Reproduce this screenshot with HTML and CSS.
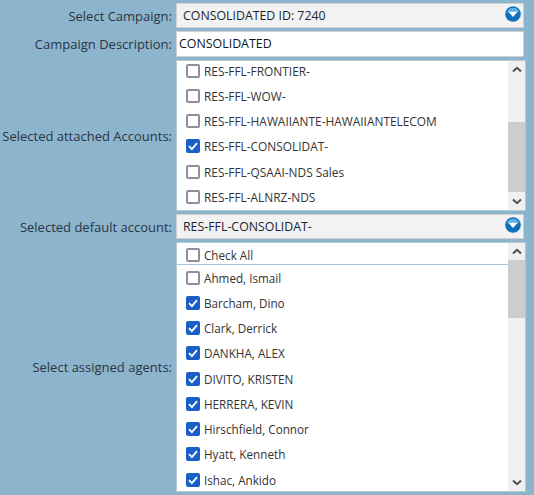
FILE: index.html
```html
<!DOCTYPE html>
<html lang="en">
<head>
  <meta charset="UTF-8" />
  <title>Campaign Settings</title>
  <link rel="stylesheet" href="styles.css">
</head>
<body>
  <svg width="0" height="0" class="defs">
    <symbol id="tick" viewBox="0 0 14 14">
      <rect width="14" height="14" rx="2" fill="#1a5fc8"/>
      <path d="M3 7.2 L5.9 10.1 L11 4.2" fill="none" stroke="#fff" stroke-width="1.8"/>
    </symbol>
    <symbol id="drop" viewBox="0 0 18 18">
      <circle cx="9" cy="9" r="8.8" fill="#0f6fb8"/>
      <path d="M2 7 A7.4 7.4 0 0 1 16 7 Z" fill="#5aaee6"/>
      <path d="M3.8 6.5 H14.2 L9 12.5 Z" fill="#fff"/>
    </symbol>
    <symbol id="up" viewBox="0 0 10 7">
      <path d="M1 5.5 L5 1.8 L9 5.5" fill="none" stroke="#505050" stroke-width="2"/>
    </symbol>
    <symbol id="down" viewBox="0 0 10 7">
      <path d="M1 1.5 L5 5.2 L9 1.5" fill="none" stroke="#505050" stroke-width="2"/>
    </symbol>
  </svg>

  <div class="form">
    <label class="lbl">Select Campaign:</label>
    <div class="combo">
      <span>CONSOLIDATED ID: 7240</span>
      <svg class="drop"><use href="#drop"/></svg>
    </div>

    <label class="lbl">Campaign Description:</label>
    <div class="textbox">CONSOLIDATED</div>

    <label class="lbl">Selected attached Accounts:</label>
    <div class="listbox accounts">
      <div class="items">
        <div class="item"><span class="box"></span>RES-FFL-FRONTIER-</div>
        <div class="item"><span class="box"></span>RES-FFL-WOW-</div>
        <div class="item"><span class="box"></span>RES-FFL-HAWAIIANTE-HAWAIIANTELECOM</div>
        <div class="item"><svg class="check"><use href="#tick"/></svg>RES-FFL-CONSOLIDAT-</div>
        <div class="item"><span class="box"></span>RES-FFL-QSAAI-NDS Sales</div>
        <div class="item"><span class="box"></span>RES-FFL-ALNRZ-NDS</div>
      </div>
      <div class="scrollbar">
        <div class="arrow"><svg class="chev"><use href="#up"/></svg></div>
        <div class="track"><div class="thumb thumb-accounts"></div></div>
        <div class="arrow"><svg class="chev"><use href="#down"/></svg></div>
      </div>
    </div>

    <label class="lbl">Selected default account:</label>
    <div class="combo">
      <span>RES-FFL-CONSOLIDAT-</span>
      <svg class="drop"><use href="#drop"/></svg>
    </div>

    <label class="lbl">Select assigned agents:</label>
    <div class="listbox agents">
      <div class="items">
        <div class="item check-all"><span class="box"></span>Check All</div>
        <div class="item"><span class="box"></span>Ahmed, Ismail</div>
        <div class="item"><svg class="check"><use href="#tick"/></svg>Barcham, Dino</div>
        <div class="item"><svg class="check"><use href="#tick"/></svg>Clark, Derrick</div>
        <div class="item"><svg class="check"><use href="#tick"/></svg>DANKHA, ALEX</div>
        <div class="item"><svg class="check"><use href="#tick"/></svg>DIVITO, KRISTEN</div>
        <div class="item"><svg class="check"><use href="#tick"/></svg>HERRERA, KEVIN</div>
        <div class="item"><svg class="check"><use href="#tick"/></svg>Hirschfield, Connor</div>
        <div class="item"><svg class="check"><use href="#tick"/></svg>Hyatt, Kenneth</div>
        <div class="item"><svg class="check"><use href="#tick"/></svg>Ishac, Ankido</div>
      </div>
      <div class="scrollbar">
        <div class="arrow"><svg class="chev"><use href="#up"/></svg></div>
        <div class="track"><div class="thumb thumb-agents"></div></div>
        <div class="arrow"><svg class="chev"><use href="#down"/></svg></div>
      </div>
    </div>
  </div>
</body>
</html>
```

FILE: styles.css
```css
html, body {
  height: 100%;
}

body {
  margin: 0;
  background: #8db4cd;
  font-family: "Open Sans", "Noto Sans", sans-serif;
  font-size: 12px;
  color: #222;
  overflow: hidden;
}

.defs {
  position: absolute;
}

.form {
  display: grid;
  grid-template-columns: 172px 350px;
  column-gap: 4px;
  grid-template-rows: 25px 26px 151px 25px 250px;
  row-gap: 3px;
  padding-top: 3px;
  align-items: center;
}

.lbl {
  text-align: right;
  font-size: 13px;
  color: #2b3440;
}

.combo {
  display: flex;
  align-items: center;
  justify-content: space-between;
  box-sizing: border-box;
  height: 25px;
  width: 348px;
  padding: 0 2px 0 6px;
  background: #f2f2f2;
  border: 1px solid #d0d0d0;
  font-size: 12.35px;
  color: #1c2530;
}

.drop {
  width: 16px;
  height: 16px;
  margin-bottom: 3px;
}

.textbox {
  box-sizing: border-box;
  height: 26px;
  width: 348px;
  line-height: 24px;
  padding-left: 2px;
  background: #fff;
  border: 1px solid #d0d0d0;
  font-size: 12.4px;
  color: #10151c;
}

.listbox {
  display: flex;
  box-sizing: border-box;
  height: 100%;
  background: #fff;
  border: 1px solid #b4c8d6;
  overflow: hidden;
}

.items {
  flex: 1;
  overflow: hidden;
  font-size: 11.9px;
}

.accounts .items {
  margin-top: -3px;
}

.agents .items {
  font-size: 11.7px;
}

.item {
  display: flex;
  align-items: center;
  height: 25.25px;
  padding-left: 9px;
  color: #333;
}

.check-all {
  box-sizing: border-box;
  height: 22px;
  padding-top: 2px;
  border-bottom: 1px solid #a9c4d6;
}

.box {
  box-sizing: border-box;
  width: 14px;
  height: 14px;
  margin-right: 4px;
  background: #fff;
  border: 2px solid #8e8e9c;
  border-radius: 2px;
}

.check {
  width: 14px;
  height: 14px;
  margin-right: 4px;
}

.scrollbar {
  display: flex;
  flex-direction: column;
  width: 17px;
  background: #f0f0f0;
}

.arrow {
  display: flex;
  align-items: center;
  justify-content: center;
  height: 17px;
}

.chev {
  width: 10px;
  height: 7px;
}

.track {
  flex: 1;
}

.thumb {
  background: #cdcdcd;
}

.thumb-accounts {
  height: 70px;
  margin-top: 44px;
}

.thumb-agents {
  height: 58px;
}
```
